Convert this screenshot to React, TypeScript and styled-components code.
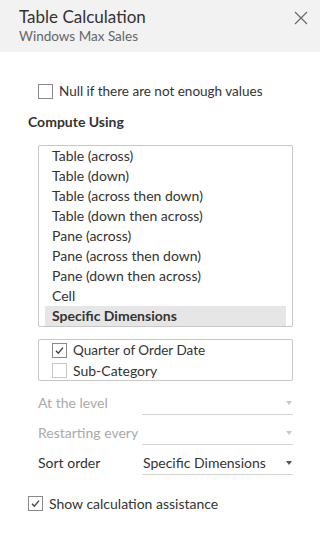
import React from "react";
import styled, { createGlobalStyle } from "styled-components";

const Global = createGlobalStyle`
  html, body { margin: 0; padding: 0; background: #fff; }
  body { font-family: Lato, "Open Sans", Arial, sans-serif; color: #333; }
  * { box-sizing: border-box; }
`;

const Panel = styled.div`
  width: 320px;
  height: 547px;
  background: #fff;
  display: flex;
  flex-direction: column;
`;

const Header = styled.div`
  height: 52px;
  background: #f2f2f2;
  display: flex;
  justify-content: space-between;
  align-items: flex-start;
  padding: 6px 12px 0 19px;
`;

const Titles = styled.div`
  display: flex;
  flex-direction: column;
`;

const Title = styled.div`
  font-size: 17px;
  line-height: 21px;
  color: #333;
`;

const Subtitle = styled.div`
  font-size: 13.5px;
  line-height: 16px;
  color: #666;
  margin-top: 1px;
`;

const CloseButton = styled.button`
  border: none;
  background: none;
  padding: 0;
  margin-top: 5px;
  width: 14px;
  height: 14px;
  display: flex;
  cursor: pointer;
`;

const Body = styled.div`
  display: flex;
  flex-direction: column;
  padding: 29px 27px 0 28px;
`;

const CheckRow = styled.label<{ $indent?: number; $size?: number }>`
  display: flex;
  align-items: center;
  gap: 6px;
  font-size: ${(p) => p.$size ?? 14}px;
  height: 20px;
  padding-left: ${(p) => p.$indent ?? 0}px;
  color: #333;
`;

const Box = styled.span<{ $light?: boolean }>`
  width: 15px;
  height: 15px;
  border: 1px solid ${(p) => (p.$light ? "#c8c8c8" : "#8a8a8a")};
  background: #fff;
  display: flex;
  align-items: center;
  justify-content: center;
  flex: none;
`;

const SectionTitle = styled.div`
  font-weight: bold;
  font-size: 14px;
  line-height: 20px;
  margin-top: 11px;
`;

const ListBox = styled.div`
  margin: 13px 0 0 10px;
  border: 1px solid #c8c8c8;
  border-radius: 2px;
  padding: 0 6px 0 6px;
  display: flex;
  flex-direction: column;
`;

const ListItem = styled.div<{ $selected?: boolean }>`
  height: 20px;
  line-height: 20px;
  font-size: 14px;
  padding-left: 7px;
  background: ${(p) => (p.$selected ? "#e6e6e6" : "transparent")};
  font-weight: ${(p) => (p.$selected ? "bold" : "normal")};
`;

const DimBox = styled.div`
  margin: 12px 0 0 10px;
  border: 1px solid #c8c8c8;
  border-radius: 2px;
  height: 42px;
  display: flex;
  flex-direction: column;
  padding-top: 0;
`;

const FieldGrid = styled.div`
  margin: 12px 0 0 10px;
  display: grid;
  grid-template-columns: 104px 1fr;
  row-gap: 8px;
`;

const FieldLabel = styled.div<{ $disabled?: boolean }>`
  font-size: 14px;
  line-height: 20px;
  color: ${(p) => (p.$disabled ? "#aaa" : "#333")};
`;

const Select = styled.div<{ $disabled?: boolean }>`
  height: 22px;
  padding: 0 0 2px 1px;
  border-bottom: 1px solid #d4d4d4;
  display: flex;
  justify-content: space-between;
  align-items: center;
  font-size: 14px;
  color: ${(p) => (p.$disabled ? "#aaa" : "#333")};
`;

const Arrow = styled.span<{ $disabled?: boolean }>`
  width: 0;
  height: 0;
  border-left: 3.5px solid transparent;
  border-right: 3.5px solid transparent;
  border-top: 4px solid ${(p) => (p.$disabled ? "#c8c8c8" : "#555")};
  margin-right: 1px;
`;

const Footer = styled.div`
  margin-top: 18px;
`;

const Check = ({ checked, light }: { checked?: boolean; light?: boolean }) => (
  <Box $light={light}>
    {checked && (
      <svg width="11" height="11" viewBox="0 0 11 11">
        <path d="M2 5.8 L4.3 8.2 L9 2.6" fill="none" stroke="#444" strokeWidth="1.4" />
      </svg>
    )}
  </Box>
);

const items = [
  "Table (across)",
  "Table (down)",
  "Table (across then down)",
  "Table (down then across)",
  "Pane (across)",
  "Pane (across then down)",
  "Pane (down then across)",
  "Cell",
  "Specific Dimensions",
];

export default function App() {
  return (
    <Panel>
      <Global />
      <Header>
        <Titles>
          <Title>Table Calculation</Title>
          <Subtitle>Windows Max Sales</Subtitle>
        </Titles>
        <CloseButton aria-label="Close">
          <svg width="14" height="14" viewBox="0 0 14 14">
            <path d="M1 1 L13 13 M13 1 L1 13" stroke="#666" strokeWidth="1.1" />
          </svg>
        </CloseButton>
      </Header>
      <Body>
        <CheckRow $indent={10} $size={13.5}>
          <Check />
          Null if there are not enough values
        </CheckRow>
        <SectionTitle>Compute Using</SectionTitle>
        <ListBox>
          {items.map((it, i) => (
            <ListItem key={it} $selected={i === items.length - 1}>
              {it}
            </ListItem>
          ))}
        </ListBox>
        <DimBox>
          <CheckRow $indent={13} $size={13.5}>
            <Check checked />
            Quarter of Order Date
          </CheckRow>
          <CheckRow $indent={13}>
            <Check light />
            Sub-Category
          </CheckRow>
        </DimBox>
        <FieldGrid>
          <FieldLabel $disabled>At the level</FieldLabel>
          <Select $disabled>
            <span />
            <Arrow $disabled />
          </Select>
          <FieldLabel $disabled>Restarting every</FieldLabel>
          <Select $disabled>
            <span />
            <Arrow $disabled />
          </Select>
          <FieldLabel>Sort order</FieldLabel>
          <Select>
            <span>Specific Dimensions</span>
            <Arrow />
          </Select>
        </FieldGrid>
        <Footer>
          <CheckRow>
            <Check checked />
            Show calculation assistance
          </CheckRow>
        </Footer>
      </Body>
    </Panel>
  );
}
